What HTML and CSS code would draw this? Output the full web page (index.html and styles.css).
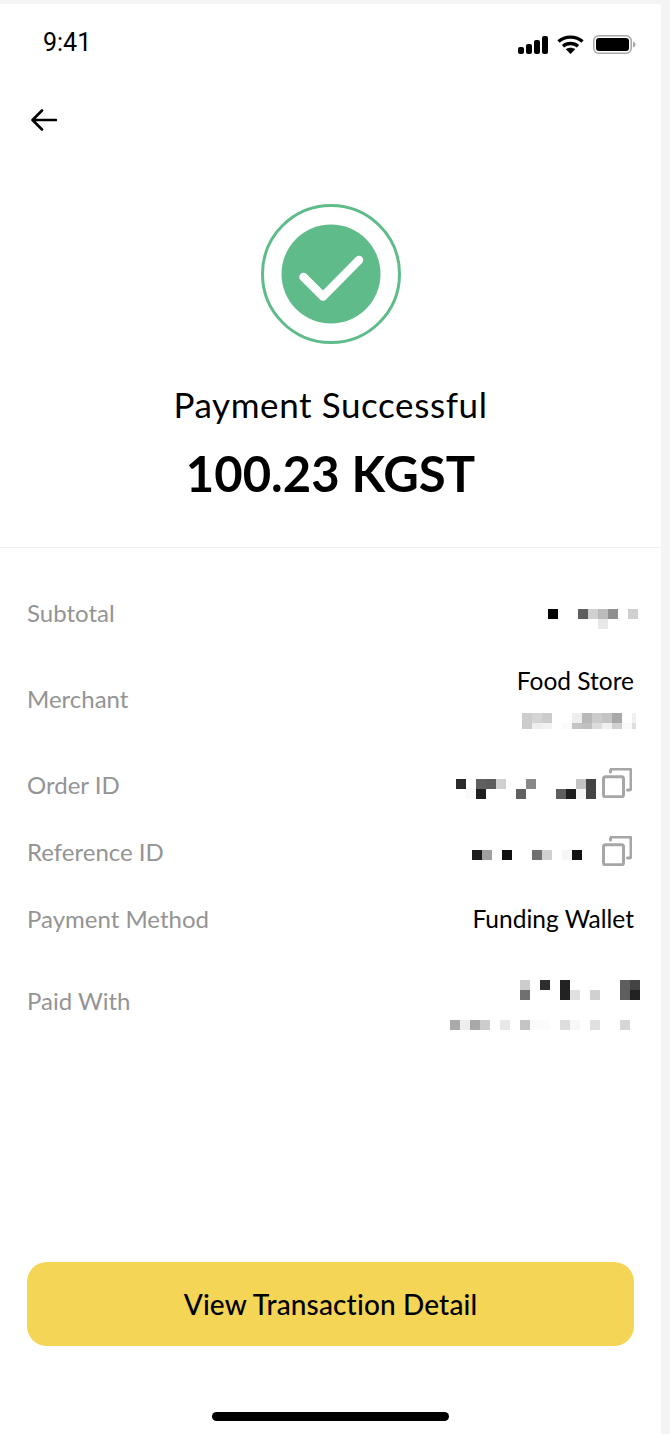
FILE: index.html
```html
<!DOCTYPE html>
<html lang="en">
<head>
  <meta charset="UTF-8" />
  <meta name="viewport" content="width=device-width, initial-scale=1.0" />
  <title>Payment Successful</title>
  <link rel="stylesheet" href="styles.css">
</head>
<body>
  <div class="screen">

    <div class="status-bar">
      <span class="status-time">9:41</span>
      <div class="status-icons">
        <svg width="30" height="18" viewBox="0 0 30 18" fill="#000">
          <rect x="0" y="11" width="6" height="7" rx="2" />
          <rect x="8" y="8" width="6" height="10" rx="2" />
          <rect x="16" y="4" width="6" height="14" rx="2" />
          <rect x="24" y="0" width="6" height="18" rx="2" />
        </svg>
        <svg width="27" height="19" viewBox="0 0 27 19" fill="none" stroke="#000" stroke-width="3.4">
          <path d="M1.5 6.5C8 .6 19 .6 25.5 6.5" />
          <path d="M6 11.2c4.2-3.6 10.800-3.600 15 0" />
          <path d="M13.500 19l-4.700-4.800c2.600-2 6.800-2 9.400 0z" fill="#000" stroke="none" />
        </svg>
        <svg width="43" height="19" viewBox="0 0 43 19">
          <rect x="0.750" y="0.750" width="37.500" height="17.500" rx="5" fill="none" stroke="#a8a8a8" stroke-width="1.500" />
          <rect x="3" y="3" width="33" height="13" rx="3" fill="#000" />
          <path d="M40 6.500c1.700.6 2.500 1.700 2.500 3s-.8 2.400-2.500 3z" fill="#a8a8a8" />
        </svg>
      </div>
    </div>

    <div class="nav-bar">
      <svg width="26" height="22" viewBox="0 0 26 22" fill="none" stroke="#000" stroke-width="2.600" stroke-linecap="round" stroke-linejoin="round">
        <path d="M25 11H2M11 1.500L1.500 11l9.500 9.500" />
      </svg>
    </div>

    <div class="result">
      <svg class="result-icon" width="142" height="142" viewBox="0 0 142 142">
        <circle cx="71" cy="71" r="68.500" fill="none" stroke="#5fbc8a" stroke-width="3" />
        <circle cx="71" cy="71" r="49.500" fill="#5fbc8a" />
        <path d="M43.500 74L63 93.500 99 57" fill="none" stroke="#fff" stroke-width="8.500" stroke-linecap="round" stroke-linejoin="round" />
      </svg>
      <div class="result-title">Payment Successful</div>
      <div class="result-amount">100.23 KGST</div>
    </div>

    <div class="details">
      <div class="row">
        <span class="label">Subtotal</span>
        <div class="value">
          <svg class="mosaic mosaic-low" width="90" height="20" viewBox="548 610 90 20">
            <rect x="548" y="610" width="10" height="10" fill="#000" />
            <rect x="578" y="610" width="10" height="10" fill="#5f5f5f" />
            <rect x="588" y="610" width="10" height="10" fill="#d0d0d0" />
            <rect x="598" y="610" width="10" height="10" fill="#bbb" />
            <rect x="608" y="610" width="10" height="10" fill="#909090" />
            <rect x="628" y="610" width="10" height="10" fill="#d0d0d0" />
            <rect x="598" y="620" width="10" height="10" fill="#e8e8e8" />
          </svg>
        </div>
      </div>

      <div class="row">
        <span class="label">Merchant</span>
        <div class="value value-stack">
          <span class="merchant-name">Food Store</span>
          <svg class="mosaic mosaic-sub" width="114" height="16" viewBox="522 714 114 16">
            <rect x="522" y="714" width="10" height="10" fill="#ccc" />
            <rect x="532" y="714" width="10" height="10" fill="#d4d4d4" />
            <rect x="542" y="714" width="10" height="10" fill="#ccc" />
            <rect x="572" y="714" width="10" height="10" fill="#eee" />
            <rect x="582" y="714" width="10" height="10" fill="#b8b8b8" />
            <rect x="592" y="714" width="10" height="10" fill="#ccc" />
            <rect x="602" y="714" width="10" height="10" fill="#c4c4c4" />
            <rect x="612" y="714" width="10" height="10" fill="#a8a8a8" />
            <rect x="632" y="714" width="4" height="10" fill="#f0f0f0" />
            <rect x="522" y="724" width="10" height="6" fill="#ccc" />
            <rect x="532" y="724" width="10" height="6" fill="#eee" />
            <rect x="542" y="724" width="10" height="6" fill="#f2f2f2" />
            <rect x="562" y="724" width="10" height="6" fill="#fafafa" />
            <rect x="572" y="724" width="10" height="6" fill="#c4c4c4" />
            <rect x="582" y="724" width="10" height="6" fill="#c0c0c0" />
            <rect x="592" y="724" width="10" height="6" fill="#dcdcdc" />
            <rect x="602" y="724" width="10" height="6" fill="#f0f0f0" />
            <rect x="612" y="724" width="10" height="6" fill="#d0d0d0" />
            <rect x="622" y="724" width="10" height="6" fill="#fafafa" />
            <rect x="632" y="724" width="4" height="6" fill="#ddd" />
          </svg>
        </div>
      </div>

      <div class="row">
        <span class="label">Order ID</span>
        <div class="value value-copy">
          <svg class="mosaic" width="140" height="20" viewBox="456 780 140 20">
            <rect x="456" y="780" width="10" height="10" fill="#2a2a2a" />
            <rect x="476" y="780" width="10" height="10" fill="#606060" />
            <rect x="486" y="780" width="10" height="10" fill="#5c5c5c" />
            <rect x="496" y="780" width="10" height="10" fill="#d0d0d0" />
            <rect x="526" y="780" width="10" height="10" fill="#888" />
            <rect x="576" y="780" width="10" height="10" fill="#c4c4c4" />
            <rect x="586" y="780" width="10" height="10" fill="#444" />
            <rect x="466" y="790" width="10" height="10" fill="#fafafa" />
            <rect x="476" y="790" width="10" height="10" fill="#1e1e1e" />
            <rect x="516" y="790" width="10" height="10" fill="#606060" />
            <rect x="556" y="790" width="10" height="10" fill="#5e5e5e" />
            <rect x="566" y="790" width="10" height="10" fill="#1e1e1e" />
            <rect x="576" y="790" width="10" height="10" fill="#f6f6f6" />
            <rect x="586" y="790" width="10" height="10" fill="#444" />
          </svg>
          <svg class="copy-icon" width="30" height="30" viewBox="0 0 30 30" fill="none" stroke="#a6a6a6" stroke-width="3" stroke-linejoin="round" stroke-linecap="round">
            <rect x="1.500" y="8.800" width="20" height="20" rx="2" />
            <path d="M8.500 4V3a2 2 0 0 1 2-2H27a2 2 0 0 1 2 2v17a2 2 0 0 1-2 2h-1.500" />
          </svg>
        </div>
      </div>

      <div class="row">
        <span class="label">Reference ID</span>
        <div class="value value-copy">
          <svg class="mosaic mosaic-ref" width="110" height="10" viewBox="472 850 110 10">
            <rect x="472" y="850" width="10" height="10" fill="#1e1e1e" />
            <rect x="482" y="850" width="10" height="10" fill="#a0a0a0" />
            <rect x="502" y="850" width="10" height="10" fill="#111" />
            <rect x="532" y="850" width="10" height="10" fill="#707070" />
            <rect x="542" y="850" width="10" height="10" fill="#d0d0d0" />
            <rect x="562" y="850" width="10" height="10" fill="#f6f6f6" />
            <rect x="572" y="850" width="10" height="10" fill="#111" />
          </svg>
          <svg class="copy-icon" width="30" height="30" viewBox="0 0 30 30" fill="none" stroke="#a6a6a6" stroke-width="3" stroke-linejoin="round" stroke-linecap="round">
            <rect x="1.500" y="8.800" width="20" height="20" rx="2" />
            <path d="M8.500 4V3a2 2 0 0 1 2-2H27a2 2 0 0 1 2 2v17a2 2 0 0 1-2 2h-1.500" />
          </svg>
        </div>
      </div>

      <div class="row">
        <span class="label">Payment Method</span>
        <div class="value">Funding Wallet</div>
      </div>

      <div class="row">
        <span class="label">Paid With</span>
        <div class="value value-stack">
          <svg class="mosaic mosaic-card" width="120" height="20" viewBox="520 980 120 20">
            <rect x="520" y="980" width="10" height="10" fill="#ccc" />
            <rect x="540" y="980" width="10" height="10" fill="#2e2e2e" />
            <rect x="560" y="980" width="10" height="10" fill="#222" />
            <rect x="620" y="980" width="10" height="10" fill="#5e5e5e" />
            <rect x="630" y="980" width="10" height="10" fill="#444" />
            <rect x="520" y="990" width="10" height="10" fill="#707070" />
            <rect x="560" y="990" width="10" height="10" fill="#222" />
            <rect x="570" y="990" width="10" height="10" fill="#e0e0e0" />
            <rect x="590" y="990" width="10" height="10" fill="#d0d0d0" />
            <rect x="620" y="990" width="10" height="10" fill="#5e5e5e" />
            <rect x="630" y="990" width="10" height="10" fill="#222" />
          </svg>
          <svg class="mosaic mosaic-card-sub" width="180" height="10" viewBox="450 1020 180 10">
            <rect x="450" y="1020" width="10" height="10" fill="#aaa" />
            <rect x="460" y="1020" width="10" height="10" fill="#eee" />
            <rect x="470" y="1020" width="10" height="10" fill="#a8a8a8" />
            <rect x="480" y="1020" width="10" height="10" fill="#ccc" />
            <rect x="500" y="1020" width="10" height="10" fill="#e8e8e8" />
            <rect x="520" y="1020" width="10" height="10" fill="#c4c4c4" />
            <rect x="530" y="1020" width="10" height="10" fill="#fbfbfb" />
            <rect x="540" y="1020" width="10" height="10" fill="#fcfcfc" />
            <rect x="560" y="1020" width="10" height="10" fill="#ddd" />
            <rect x="570" y="1020" width="10" height="10" fill="#f8f8f8" />
            <rect x="590" y="1020" width="10" height="10" fill="#e0e0e0" />
            <rect x="620" y="1020" width="10" height="10" fill="#d6d6d6" />
          </svg>
        </div>
      </div>
    </div>

    <div class="footer">
      <button class="primary-btn">View Transaction Detail</button>
      <div class="home-bar"></div>
    </div>

  </div>
</body>
</html>
```

FILE: styles.css
```css
:root {
  --text: #000;
  --muted: #949494;
  --green: #5fbc8a;
  --yellow: #f5d555;
  --font: 'Lato', 'Liberation Sans', sans-serif;
}

html, body {
  height: 100%;
}

body {
  margin: 0;
  padding-top: 4px;
  box-sizing: border-box;
  background: #f4f4f4;
  font-family: var(--font);
  color: var(--text);
  overflow: hidden;
}

.screen {
  width: 661px;
  height: 1430px;
  background: #fff;
  display: flex;
  flex-direction: column;
}

.status-bar {
  display: flex;
  justify-content: space-between;
  align-items: flex-start;
  height: 92px;
  padding: 0 34px 0 43px;
  box-sizing: border-box;
}

.status-time {
  margin-top: 22px;
  font-family: 'Roboto', sans-serif;
  font-size: 25px;
  line-height: 34px;
}

.status-icons {
  display: flex;
  align-items: flex-end;
  gap: 9px;
  margin-top: 31px;
  margin-right: -9px;
}

.nav-bar {
  height: 48px;
  padding-left: 31px;
  display: flex;
  align-items: center;
}

.result {
  display: flex;
  flex-direction: column;
  align-items: center;
  height: 404px;
  box-sizing: border-box;
  padding-top: 59px;
  border-bottom: 1px solid #f0f0f0;
}

.result-title {
  margin-top: 37px;
  font-size: 35px;
  letter-spacing: 0.6px;
  line-height: 44px;
}

.result-amount {
  margin-top: 22px;
  font-size: 49px;
  font-weight: 700;
  line-height: 50px;
}

.details {
  display: flex;
  flex-direction: column;
  gap: 39px;
  padding: 51px 27px 0;
}

.row {
  display: flex;
  justify-content: space-between;
  align-items: center;
}

.label {
  font-size: 24px;
  line-height: 28px;
  color: var(--muted);
}

.value {
  display: flex;
  min-height: 28px;
  font-size: 24.5px;
  line-height: 28px;
}

.value-stack {
  flex-direction: column;
  align-items: flex-end;
}

.value-copy {
  align-items: flex-start;
  gap: 6px;
  margin-right: 2px;
}

.merchant-name {
  margin-top: 1px;
}

.mosaic {
  display: block;
  flex-shrink: 0;
}

.value-copy .mosaic {
  margin-top: 9px;
}

.value-copy .mosaic-ref {
  margin-top: 12px;
  margin-right: 14px;
}

.copy-icon {
  margin-top: -2px;
}

.mosaic-low {
  margin-top: 10px;
  margin-right: -4px;
  margin-bottom: -2px;
}

.mosaic-sub {
  margin-top: 18px;
  margin-right: -2px;
  margin-bottom: 2px;
}

.mosaic-card {
  margin-top: 8px;
  margin-right: -6px;
}

.mosaic-card-sub {
  margin-top: 20px;
  margin-right: 4px;
}

.footer {
  margin-top: auto;
  padding: 0 27px 13px;
  display: flex;
  flex-direction: column;
  align-items: center;
}

.primary-btn {
  width: 100%;
  height: 84px;
  border: none;
  border-radius: 20px;
  background: var(--yellow);
  color: var(--text);
  font-family: var(--font);
  font-size: 28px;
  font-weight: 500;
  letter-spacing: 0.15px;
  cursor: pointer;
}

.home-bar {
  width: 237px;
  height: 9px;
  margin-top: 66px;
  border-radius: 5px;
  background: #000;
}
```
